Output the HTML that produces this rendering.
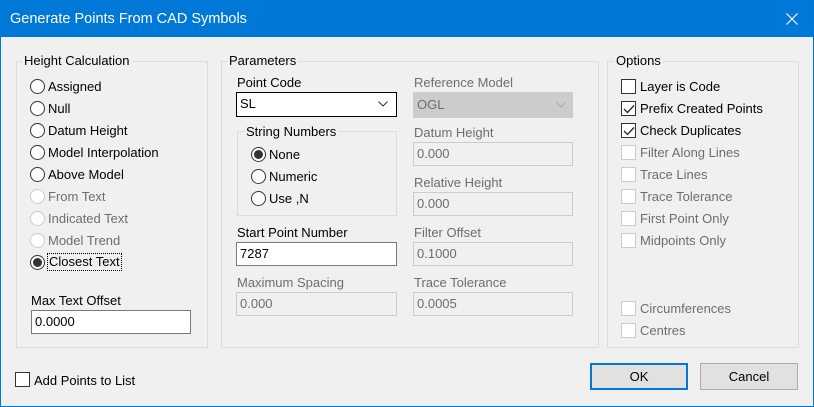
<!DOCTYPE html>
<html><head><meta charset="utf-8"><style>
*{box-sizing:border-box;margin:0;padding:0}
body{width:814px;height:407px;overflow:hidden;background:#f0f0f0;font-family:"Liberation Sans",sans-serif;font-size:13px;color:#000;position:relative}
.a{position:absolute;white-space:nowrap;line-height:15px}
.win{position:absolute;left:0;top:0;width:814px;height:407px;border:1px solid #0078d7;border-top:none}
.title{position:absolute;left:0;top:0;width:814px;height:37px;background:#0078d7;color:#fff;font-size:15px}
.grp{position:absolute;border:1px solid #dcdcdc}
.gl{position:absolute;background:#f0f0f0;padding:0 2px;line-height:15px}
.r{position:absolute;width:15px;height:15px;border:1px solid #333;border-radius:50%;background:#fff}
.r.d{border-color:#ccc}
.r.s::after{content:"";position:absolute;left:2px;top:2px;width:9px;height:9px;border-radius:50%;background:#333}
.c{position:absolute;width:15px;height:15px;border:1px solid #333;background:#fff}
.c.d{border-color:#ccc}
.g{color:#6d6d6d}
.inp{position:absolute;border:1px solid #7a7a7a;background:#fff;padding-left:3px;line-height:21px}
.inp.d{border-color:#ccc;background:#f0f0f0;color:#6d6d6d}
</style></head><body>
<div class="win"></div>
<div class="title"><span class="a" style="left:10px;top:11px;font-size:14.5px;line-height:17px">Generate Points From CAD Symbols</span>
<svg style="position:absolute;left:786px;top:13px" width="12" height="12"><path d="M0.5 0.5L11.5 11.5M11.5 0.5L0.5 11.5" stroke="#fff" stroke-width="1.2"/></svg></div>

<div class="grp" style="left:16px;top:61px;width:192px;height:287px"></div>
<div class="gl" style="left:22px;top:53px">Height Calculation</div>
<div class="r" style="left:30px;top:79px"></div><div class="a" style="left:48px;top:79px">Assigned</div>
<div class="r" style="left:30px;top:101px"></div><div class="a" style="left:48px;top:101px">Null</div>
<div class="r" style="left:30px;top:123px"></div><div class="a" style="left:48px;top:123px">Datum Height</div>
<div class="r" style="left:30px;top:145px"></div><div class="a" style="left:48px;top:145px">Model Interpolation</div>
<div class="r" style="left:30px;top:167px"></div><div class="a" style="left:48px;top:167px">Above Model</div>
<div class="r d" style="left:30px;top:189px"></div><div class="a g" style="left:48px;top:189px">From Text</div>
<div class="r d" style="left:30px;top:211px"></div><div class="a g" style="left:48px;top:211px">Indicated Text</div>
<div class="r d" style="left:30px;top:233px"></div><div class="a g" style="left:48px;top:233px">Model Trend</div>
<div class="r s" style="left:30px;top:255px"></div><div class="a" style="left:47px;top:253px;border:1px dotted #000;padding:0 1px;line-height:16px">Closest Text</div>
<div class="a" style="left:31px;top:293px">Max Text Offset</div>
<div class="inp" style="left:31px;top:310px;width:160px;height:24px">0.0000</div>

<div class="grp" style="left:221px;top:61px;width:378px;height:287px"></div>
<div class="gl" style="left:227px;top:53px">Parameters</div>
<div class="a" style="left:237px;top:75px">Point Code</div>
<div class="inp" style="left:236px;top:92px;width:161px;height:25px;border-color:#000">SL</div>
<svg style="position:absolute;left:378px;top:101px" width="10" height="6"><path d="M0.5 0.5L5 5L9.5 0.5" stroke="#333" fill="none"/></svg>
<div class="grp" style="left:237px;top:131px;width:160px;height:85px"></div>
<div class="gl" style="left:244px;top:124px">String Numbers</div>
<div class="r s" style="left:251px;top:147px"></div><div class="a" style="left:269px;top:147px">None</div>
<div class="r" style="left:251px;top:169px"></div><div class="a" style="left:269px;top:169px">Numeric</div>
<div class="r" style="left:251px;top:191px"></div><div class="a" style="left:269px;top:191px">Use ,N</div>
<div class="a" style="left:237px;top:225px">Start Point Number</div>
<div class="inp" style="left:236px;top:242px;width:161px;height:24px">7287</div>
<div class="a g" style="left:237px;top:275px">Maximum Spacing</div>
<div class="inp d" style="left:236px;top:292px;width:161px;height:24px">0.000</div>

<div class="a g" style="left:414px;top:75px">Reference Model</div>
<div class="inp d" style="left:413px;top:92px;width:160px;height:26px;background:#cccccc;border-color:#ccc;line-height:24px">OGL</div>
<svg style="position:absolute;left:556px;top:102px" width="10" height="6"><path d="M0.5 0.5L5 5L9.5 0.5" stroke="#aaa" fill="none"/></svg>
<div class="a g" style="left:414px;top:125px">Datum Height</div>
<div class="inp d" style="left:413px;top:142px;width:160px;height:24px">0.000</div>
<div class="a g" style="left:414px;top:175px">Relative Height</div>
<div class="inp d" style="left:413px;top:192px;width:160px;height:24px">0.000</div>
<div class="a g" style="left:414px;top:225px">Filter Offset</div>
<div class="inp d" style="left:413px;top:242px;width:160px;height:24px">0.1000</div>
<div class="a g" style="left:414px;top:275px">Trace Tolerance</div>
<div class="inp d" style="left:413px;top:292px;width:160px;height:24px">0.0005</div>

<div class="grp" style="left:607px;top:61px;width:192px;height:287px"></div>
<div class="gl" style="left:614px;top:53px">Options</div>
<div class="c" style="left:621px;top:79px"></div><div class="a" style="left:640px;top:79px">Layer is Code</div>
<div class="c" style="left:621px;top:101px"></div><div class="a" style="left:640px;top:101px">Prefix Created Points</div>
<div class="c" style="left:621px;top:123px"></div><div class="a" style="left:640px;top:123px">Check Duplicates</div>
<svg style="position:absolute;left:623px;top:104px" width="12" height="10"><path d="M1 5L4.5 8.5L11 1.5" stroke="#222" stroke-width="1.3" fill="none"/></svg>
<svg style="position:absolute;left:623px;top:126px" width="12" height="10"><path d="M1 5L4.5 8.5L11 1.5" stroke="#222" stroke-width="1.3" fill="none"/></svg>
<div class="c d" style="left:621px;top:145px"></div><div class="a g" style="left:640px;top:145px">Filter Along Lines</div>
<div class="c d" style="left:621px;top:167px"></div><div class="a g" style="left:640px;top:167px">Trace Lines</div>
<div class="c d" style="left:621px;top:189px"></div><div class="a g" style="left:640px;top:189px">Trace Tolerance</div>
<div class="c d" style="left:621px;top:211px"></div><div class="a g" style="left:640px;top:211px">First Point Only</div>
<div class="c d" style="left:621px;top:233px"></div><div class="a g" style="left:640px;top:233px">Midpoints Only</div>
<div class="c d" style="left:621px;top:301px"></div><div class="a g" style="left:640px;top:301px">Circumferences</div>
<div class="c d" style="left:621px;top:323px"></div><div class="a g" style="left:640px;top:323px">Centres</div>

<div class="c" style="left:15px;top:372px"></div><div class="a" style="left:34px;top:373px">Add Points to List</div>
<div style="position:absolute;left:590px;top:363px;width:98px;height:27px;border:2px solid #0078d7;background:#e1e1e1;text-align:center;line-height:23px">OK</div>
<div style="position:absolute;left:700px;top:363px;width:98px;height:27px;border:1px solid #adadad;background:#e1e1e1;text-align:center;line-height:25px">Cancel</div>
</body></html>
